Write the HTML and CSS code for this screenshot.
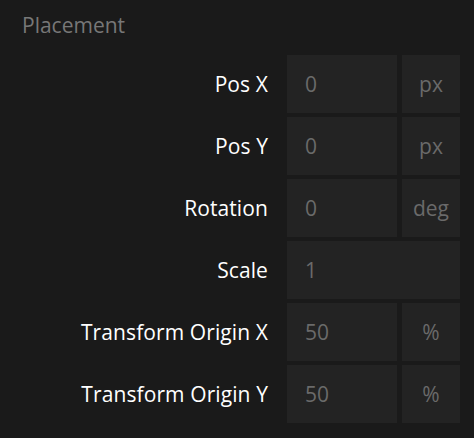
FILE: index.html
```html
<!DOCTYPE html>
<html>
<head>
<meta charset="utf-8">
<link rel="stylesheet" href="styles.css">
</head>
<body>
<div class="panel">
  <div class="title">Placement</div>
  <div class="rows">
    <div class="row"><div class="label">Pos X</div><div class="field"><div class="input">0</div><div class="unit">px</div></div></div>
    <div class="row"><div class="label">Pos Y</div><div class="field"><div class="input">0</div><div class="unit">px</div></div></div>
    <div class="row"><div class="label">Rotation</div><div class="field"><div class="input">0</div><div class="unit">deg</div></div></div>
    <div class="row"><div class="label">Scale</div><div class="field"><div class="input wide">1</div></div></div>
    <div class="row"><div class="label">Transform Origin X</div><div class="field"><div class="input">50</div><div class="unit">%</div></div></div>
    <div class="row"><div class="label">Transform Origin Y</div><div class="field"><div class="input">50</div><div class="unit">%</div></div></div>
  </div>
</div>
</body>
</html>
```
FILE: styles.css
```css
html, body {
  margin: 0;
  padding: 0;
  background: #1a1a1a;
  width: 474px;
  height: 438px;
  overflow: hidden;
}
.panel {
  font-family: "Open Sans", "Lato", sans-serif;
  padding: 12px 14px 0 22px;
}
.title {
  color: #777777;
  font-size: 21px;
  line-height: 26px;
  height: 43px;
}
.rows {
  display: flex;
  flex-direction: column;
  gap: 4px;
}
.row {
  display: flex;
  align-items: center;
  height: 58px;
}
.label {
  flex: 1;
  text-align: right;
  color: #ffffff;
  font-size: 21px;
  margin-right: 19px;
  letter-spacing: 0.1px;
}
.field {
  display: flex;
  gap: 5px;
  width: 173px;
  height: 58px;
}
.input, .unit {
  background: #232323;
  color: #6a6a6a;
  font-size: 21px;
  display: flex;
  align-items: center;
  box-sizing: border-box;
  height: 58px;
}
.input {
  width: 110px;
  padding-left: 18px;
}
.input.wide {
  width: 173px;
}
.unit {
  width: 58px;
  justify-content: center;
}
```
